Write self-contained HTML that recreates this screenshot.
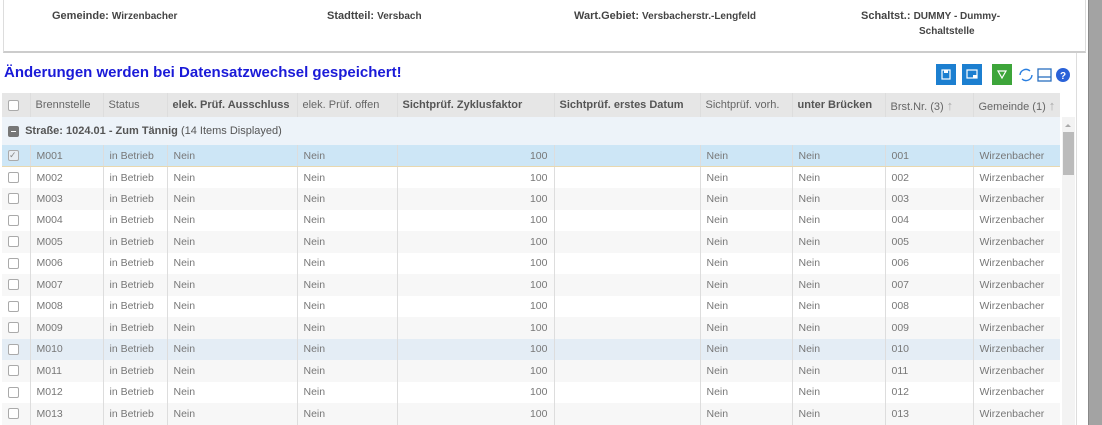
<!DOCTYPE html>
<html><head><meta charset="utf-8"><style>
*{box-sizing:border-box;margin:0;padding:0}
body{width:1102px;height:425px;overflow:hidden;background:#fff;font-family:"Liberation Sans",sans-serif;position:relative}
.top{position:absolute;left:3px;top:0;width:1083px;height:53px;border-left:1px solid #ddd;border-right:1px solid #ddd;border-bottom:2px solid #ccc;background:#fff}
.top span{position:absolute;font-size:11px;color:#444;font-weight:bold;top:10px}
.top b{color:#222}
.rbar{position:absolute;left:1088px;top:0;width:14px;height:425px;background:#a3a3a3;border-left:1px solid #888}
.gap{position:absolute;left:1076px;top:53px;width:12px;height:372px;background:#fff;border-left:1px solid #ddd}
.title{position:absolute;left:4px;top:64px;font-size:15px;font-weight:bold;color:#1a1ad8}
.btn{position:absolute;top:64px;width:20px;height:21px}
table{position:absolute;left:2px;top:93px;border-collapse:collapse;font-size:10.5px;color:#777;table-layout:fixed}
td,th{height:21.5px;padding:0 6px;white-space:nowrap;overflow:hidden;border-left:1px solid #ddd;text-align:left;font-weight:normal}
th{height:24px;background:#e6e6e6;color:#666;font-size:11px;padding:0 5px}
th.b{font-weight:bold;color:#555}
th .ar{color:#aaa;font-size:13px;margin-left:3px}
tr.g td{height:28px;background:#edf3f9;color:#555;font-size:11px;border:none}
tr.s td{background:#cde6f6;border-bottom:1px solid #e8d8b0}
tr.h td{background:#e4edf5}
tr:nth-child(odd).r td{background:#f7f7f7}
.cb{display:inline-block;width:11px;height:11px;border:1px solid #aaa;border-radius:2px;vertical-align:middle;background:#fff}
.num{text-align:right}
.sb{position:absolute;left:1062px;top:117px;width:13px;height:308px;background:#f3f3f3}
.th{position:absolute;left:1063px;top:132px;width:11px;height:43px;background:#bbb}
</style></head><body>
<div class="top">
<span style="left:48px"><b style="color:#444">Gemeinde:</b> <span style="position:static;font-size:10px">Wirzenbacher</span></span>
<span style="left:323px">Stadtteil: <span style="position:static;font-size:10px">Versbach</span></span>
<span style="left:570px">Wart.Gebiet: <span style="position:static;font-size:10px">Versbacherstr.-Lengfeld</span></span>
<span style="left:857px">Schaltst.: <span style="position:static;font-size:10px">DUMMY - Dummy-</span></span>
<span style="left:915px;top:26px;font-size:10px">Schaltstelle</span>
</div>
<div class="gap"></div>
<div class="rbar"></div>
<div class="title">Änderungen werden bei Datensatzwechsel gespeichert!</div>
<div class="btn" style="left:936px;background:#1c7fd0"><svg width="20" height="21"><rect x="6" y="6" width="8" height="9" fill="none" stroke="#fff" stroke-width="1.2"/><rect x="8" y="6" width="4" height="3" fill="#fff"/></svg></div>
<div class="btn" style="left:962px;background:#1c7fd0"><svg width="20" height="21"><rect x="5" y="6" width="10" height="8" fill="none" stroke="#fff" stroke-width="1.2"/><rect x="11" y="11" width="4" height="3" fill="#fff"/></svg></div>
<div class="btn" style="left:992px;background:#3da53a"><svg width="20" height="21"><path d="M6 7h8l-4 7z" fill="none" stroke="#fff" stroke-width="1.2"/></svg></div>
<svg style="position:absolute;left:1017px;top:66px" width="60" height="18">
<path d="M3 9a6 6 0 0 1 10-4M15 9a6 6 0 0 1-10 4" fill="none" stroke="#2a7fe0" stroke-width="1.4"/>
<rect x="21" y="3" width="13" height="12" fill="none" stroke="#2a6fc0" stroke-width="1.3"/><line x1="21" y1="11" x2="34" y2="11" stroke="#2a6fc0" stroke-width="1.3"/>
<circle cx="46" cy="9" r="7" fill="#2a62d8"/><text x="46" y="13" font-size="10" font-weight="bold" fill="#fff" text-anchor="middle" font-family="Liberation Sans">?</text>
</svg>
<table>
<colgroup><col style="width:28px"><col style="width:73px"><col style="width:64px"><col style="width:130px"><col style="width:100px"><col style="width:157px"><col style="width:146px"><col style="width:92px"><col style="width:93px"><col style="width:88px"><col style="width:87px"></colgroup>
<tr><th style="border-left:none;padding:0 6px"><span class="cb"></span></th><th>Brennstelle</th><th>Status</th><th class="b">elek. Prüf. Ausschluss</th><th>elek. Prüf. offen</th><th class="b">Sichtprüf. Zyklusfaktor</th><th class="b">Sichtprüf. erstes Datum</th><th>Sichtprüf. vorh.</th><th class="b">unter Brücken</th><th>Brst.Nr. (3)<span class="ar">↑</span></th><th>Gemeinde (1)<span class="ar">↑</span></th></tr>
<tr class="g"><td colspan="11"><span class="cb" style="background:#777;border-color:#777;position:relative"><span style="position:absolute;left:2px;top:4px;width:5px;height:1.5px;background:#fff"></span></span> <b style="margin-left:3px">Straße: 1024.01 - Zum Tännig</b> (14 Items Displayed)</td></tr>
<tr class="s"><td style="border-left:none"><span class="cb" style="background:#e8eef3;font-size:9px;line-height:9px;color:#888">✓</span></td><td>M001</td><td>in Betrieb</td><td>Nein</td><td>Nein</td><td class="num">100</td><td></td><td>Nein</td><td>Nein</td><td>001</td><td>Wirzenbacher</td></tr>
<tr class="r"><td style="border-left:none"><span class="cb"></span></td><td>M002</td><td>in Betrieb</td><td>Nein</td><td>Nein</td><td class="num">100</td><td></td><td>Nein</td><td>Nein</td><td>002</td><td>Wirzenbacher</td></tr>
<tr class="r"><td style="border-left:none"><span class="cb"></span></td><td>M003</td><td>in Betrieb</td><td>Nein</td><td>Nein</td><td class="num">100</td><td></td><td>Nein</td><td>Nein</td><td>003</td><td>Wirzenbacher</td></tr>
<tr class="r"><td style="border-left:none"><span class="cb"></span></td><td>M004</td><td>in Betrieb</td><td>Nein</td><td>Nein</td><td class="num">100</td><td></td><td>Nein</td><td>Nein</td><td>004</td><td>Wirzenbacher</td></tr>
<tr class="r"><td style="border-left:none"><span class="cb"></span></td><td>M005</td><td>in Betrieb</td><td>Nein</td><td>Nein</td><td class="num">100</td><td></td><td>Nein</td><td>Nein</td><td>005</td><td>Wirzenbacher</td></tr>
<tr class="r"><td style="border-left:none"><span class="cb"></span></td><td>M006</td><td>in Betrieb</td><td>Nein</td><td>Nein</td><td class="num">100</td><td></td><td>Nein</td><td>Nein</td><td>006</td><td>Wirzenbacher</td></tr>
<tr class="r"><td style="border-left:none"><span class="cb"></span></td><td>M007</td><td>in Betrieb</td><td>Nein</td><td>Nein</td><td class="num">100</td><td></td><td>Nein</td><td>Nein</td><td>007</td><td>Wirzenbacher</td></tr>
<tr class="r"><td style="border-left:none"><span class="cb"></span></td><td>M008</td><td>in Betrieb</td><td>Nein</td><td>Nein</td><td class="num">100</td><td></td><td>Nein</td><td>Nein</td><td>008</td><td>Wirzenbacher</td></tr>
<tr class="r"><td style="border-left:none"><span class="cb"></span></td><td>M009</td><td>in Betrieb</td><td>Nein</td><td>Nein</td><td class="num">100</td><td></td><td>Nein</td><td>Nein</td><td>009</td><td>Wirzenbacher</td></tr>
<tr class="h"><td style="border-left:none"><span class="cb"></span></td><td>M010</td><td>in Betrieb</td><td>Nein</td><td>Nein</td><td class="num">100</td><td></td><td>Nein</td><td>Nein</td><td>010</td><td>Wirzenbacher</td></tr>
<tr class="r"><td style="border-left:none"><span class="cb"></span></td><td>M011</td><td>in Betrieb</td><td>Nein</td><td>Nein</td><td class="num">100</td><td></td><td>Nein</td><td>Nein</td><td>011</td><td>Wirzenbacher</td></tr>
<tr class="r"><td style="border-left:none"><span class="cb"></span></td><td>M012</td><td>in Betrieb</td><td>Nein</td><td>Nein</td><td class="num">100</td><td></td><td>Nein</td><td>Nein</td><td>012</td><td>Wirzenbacher</td></tr>
<tr class="r"><td style="border-left:none"><span class="cb"></span></td><td>M013</td><td>in Betrieb</td><td>Nein</td><td>Nein</td><td class="num">100</td><td></td><td>Nein</td><td>Nein</td><td>013</td><td>Wirzenbacher</td></tr>
</table>
<div class="sb"></div><div class="th"></div>
<div style="position:absolute;left:1065px;top:121px;width:0;height:0;border:3px solid transparent;border-bottom:3px solid #aaa"></div>
</body></html>
